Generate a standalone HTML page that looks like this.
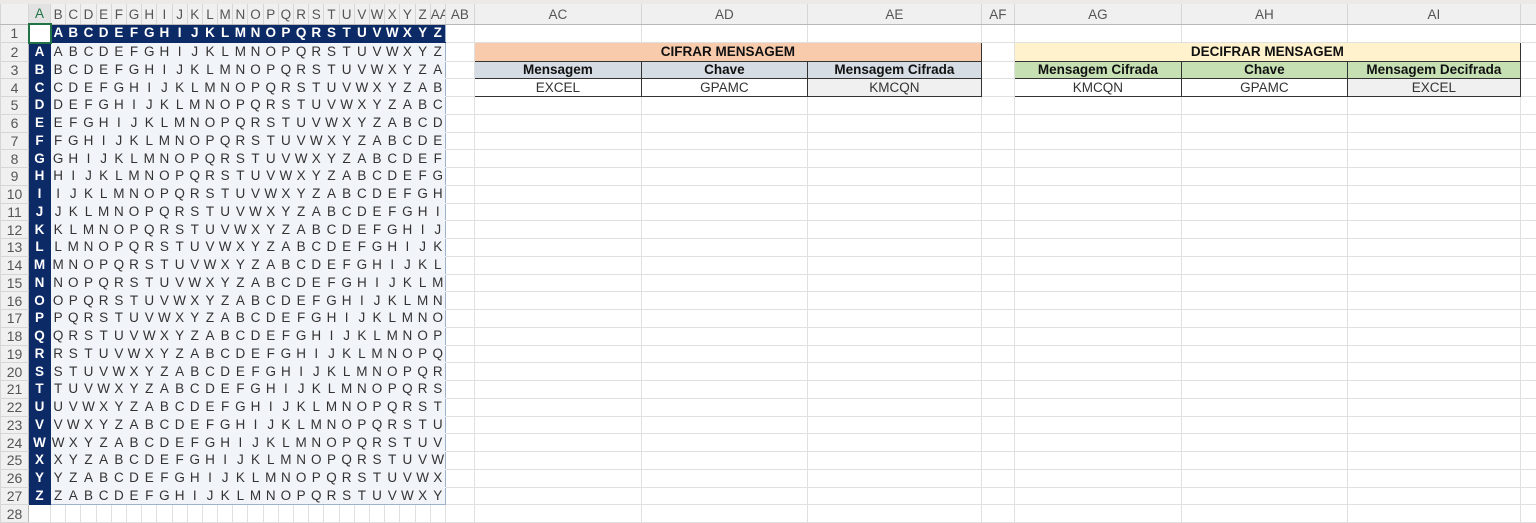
<!DOCTYPE html>
<html><head><meta charset="utf-8"><style>
html,body{margin:0;padding:0;background:#fff;width:1536px;height:512px;overflow:hidden}
body{font-family:"Liberation Sans",sans-serif;font-size:13.5px;color:#333}
table{border-collapse:collapse;table-layout:fixed;position:absolute;left:0;top:0;width:1536px}
td,th{padding:0;text-align:center;border:1px solid #e0e0e0;overflow:hidden;white-space:nowrap;height:16.75px;line-height:16px}
th{font-weight:normal;color:#555;background:#f0f0f0;border-color:#d6d6d6}
thead th{height:19px;vertical-align:bottom;line-height:18px;border-top:4px solid #eceae6;border-bottom:1px solid #b8b8b8;font-size:13.5px}
tbody th{border-right:1px solid #b8b8b8;font-size:14px}
.n{background:#0b2a66;color:#fff;font-weight:bold;border-color:#0b2a66}
.l{background:#f1f4f9;border-color:#f1f4f9}
.r{border-right:1px solid #9fb2cc}
.b td.l{border-bottom:1px solid #9fb2cc}
.o{background:#f8cbad;font-weight:bold;color:#111;border:1px solid #333}
.y{background:#fff2cc;font-weight:bold;color:#111;border:1px solid #333}
.g{background:#d6dce4;font-weight:bold;color:#111;border:1px solid #333}
.gr{background:#c6e0b4;font-weight:bold;color:#111;border:1px solid #333}
.w{border:1px solid #333}
.q{background:#f0f0f0;border:1px solid #333}
.sel{border:2px solid #217346}
</style></head><body>
<table>
<colgroup><col style="width:28px"><col style="width:22px">
<col style="width:15.2px"><col style="width:15.2px"><col style="width:15.2px"><col style="width:15.2px"><col style="width:15.2px"><col style="width:15.2px"><col style="width:15.2px"><col style="width:15.2px"><col style="width:15.2px"><col style="width:15.2px"><col style="width:15.2px"><col style="width:15.2px"><col style="width:15.2px"><col style="width:15.2px"><col style="width:15.2px"><col style="width:15.2px"><col style="width:15.2px"><col style="width:15.2px"><col style="width:15.2px"><col style="width:15.2px"><col style="width:15.2px"><col style="width:15.2px"><col style="width:15.2px"><col style="width:15.2px"><col style="width:15.2px"><col style="width:15.2px">
<col style="width:29px"><col style="width:167px"><col style="width:166px"><col style="width:174px"><col style="width:33px"><col style="width:167px"><col style="width:166px"><col style="width:173px"><col style="width:16px"></colgroup>
<thead><tr><th></th><th style="color:#217346;background:#e2e2e2">A</th><th>B</th><th>C</th><th>D</th><th>E</th><th>F</th><th>G</th><th>H</th><th>I</th><th>J</th><th>K</th><th>L</th><th>M</th><th>N</th><th>O</th><th>P</th><th>Q</th><th>R</th><th>S</th><th>T</th><th>U</th><th>V</th><th>W</th><th>X</th><th>Y</th><th>Z</th><th>AA</th><th>AB</th><th>AC</th><th>AD</th><th>AE</th><th>AF</th><th>AG</th><th>AH</th><th>AI</th><th></th></tr></thead>
<tbody>
<tr><th>1</th><td class="sel"></td><td class="n">A</td><td class="n">B</td><td class="n">C</td><td class="n">D</td><td class="n">E</td><td class="n">F</td><td class="n">G</td><td class="n">H</td><td class="n">I</td><td class="n">J</td><td class="n">K</td><td class="n">L</td><td class="n">M</td><td class="n">N</td><td class="n">O</td><td class="n">P</td><td class="n">Q</td><td class="n">R</td><td class="n">S</td><td class="n">T</td><td class="n">U</td><td class="n">V</td><td class="n">W</td><td class="n">X</td><td class="n">Y</td><td class="n r">Z</td><td></td><td></td><td></td><td></td><td></td><td></td><td></td><td></td><td></td></tr>
<tr><th>2</th><td class="n">A</td><td class="l">A</td><td class="l">B</td><td class="l">C</td><td class="l">D</td><td class="l">E</td><td class="l">F</td><td class="l">G</td><td class="l">H</td><td class="l">I</td><td class="l">J</td><td class="l">K</td><td class="l">L</td><td class="l">M</td><td class="l">N</td><td class="l">O</td><td class="l">P</td><td class="l">Q</td><td class="l">R</td><td class="l">S</td><td class="l">T</td><td class="l">U</td><td class="l">V</td><td class="l">W</td><td class="l">X</td><td class="l">Y</td><td class="l r">Z</td><td></td><td class="o" colspan="3">CIFRAR MENSAGEM</td><td></td><td class="y" colspan="3">DECIFRAR MENSAGEM</td><td></td></tr>
<tr><th>3</th><td class="n">B</td><td class="l">B</td><td class="l">C</td><td class="l">D</td><td class="l">E</td><td class="l">F</td><td class="l">G</td><td class="l">H</td><td class="l">I</td><td class="l">J</td><td class="l">K</td><td class="l">L</td><td class="l">M</td><td class="l">N</td><td class="l">O</td><td class="l">P</td><td class="l">Q</td><td class="l">R</td><td class="l">S</td><td class="l">T</td><td class="l">U</td><td class="l">V</td><td class="l">W</td><td class="l">X</td><td class="l">Y</td><td class="l">Z</td><td class="l r">A</td><td></td><td class="g">Mensagem</td><td class="g">Chave</td><td class="g">Mensagem Cifrada</td><td></td><td class="gr">Mensagem Cifrada</td><td class="gr">Chave</td><td class="gr">Mensagem Decifrada</td><td></td></tr>
<tr><th>4</th><td class="n">C</td><td class="l">C</td><td class="l">D</td><td class="l">E</td><td class="l">F</td><td class="l">G</td><td class="l">H</td><td class="l">I</td><td class="l">J</td><td class="l">K</td><td class="l">L</td><td class="l">M</td><td class="l">N</td><td class="l">O</td><td class="l">P</td><td class="l">Q</td><td class="l">R</td><td class="l">S</td><td class="l">T</td><td class="l">U</td><td class="l">V</td><td class="l">W</td><td class="l">X</td><td class="l">Y</td><td class="l">Z</td><td class="l">A</td><td class="l r">B</td><td></td><td class="w">EXCEL</td><td class="w">GPAMC</td><td class="q">KMCQN</td><td></td><td class="w">KMCQN</td><td class="w">GPAMC</td><td class="q">EXCEL</td><td></td></tr>
<tr><th>5</th><td class="n">D</td><td class="l">D</td><td class="l">E</td><td class="l">F</td><td class="l">G</td><td class="l">H</td><td class="l">I</td><td class="l">J</td><td class="l">K</td><td class="l">L</td><td class="l">M</td><td class="l">N</td><td class="l">O</td><td class="l">P</td><td class="l">Q</td><td class="l">R</td><td class="l">S</td><td class="l">T</td><td class="l">U</td><td class="l">V</td><td class="l">W</td><td class="l">X</td><td class="l">Y</td><td class="l">Z</td><td class="l">A</td><td class="l">B</td><td class="l r">C</td><td></td><td></td><td></td><td></td><td></td><td></td><td></td><td></td><td></td></tr>
<tr><th>6</th><td class="n">E</td><td class="l">E</td><td class="l">F</td><td class="l">G</td><td class="l">H</td><td class="l">I</td><td class="l">J</td><td class="l">K</td><td class="l">L</td><td class="l">M</td><td class="l">N</td><td class="l">O</td><td class="l">P</td><td class="l">Q</td><td class="l">R</td><td class="l">S</td><td class="l">T</td><td class="l">U</td><td class="l">V</td><td class="l">W</td><td class="l">X</td><td class="l">Y</td><td class="l">Z</td><td class="l">A</td><td class="l">B</td><td class="l">C</td><td class="l r">D</td><td></td><td></td><td></td><td></td><td></td><td></td><td></td><td></td><td></td></tr>
<tr><th>7</th><td class="n">F</td><td class="l">F</td><td class="l">G</td><td class="l">H</td><td class="l">I</td><td class="l">J</td><td class="l">K</td><td class="l">L</td><td class="l">M</td><td class="l">N</td><td class="l">O</td><td class="l">P</td><td class="l">Q</td><td class="l">R</td><td class="l">S</td><td class="l">T</td><td class="l">U</td><td class="l">V</td><td class="l">W</td><td class="l">X</td><td class="l">Y</td><td class="l">Z</td><td class="l">A</td><td class="l">B</td><td class="l">C</td><td class="l">D</td><td class="l r">E</td><td></td><td></td><td></td><td></td><td></td><td></td><td></td><td></td><td></td></tr>
<tr><th>8</th><td class="n">G</td><td class="l">G</td><td class="l">H</td><td class="l">I</td><td class="l">J</td><td class="l">K</td><td class="l">L</td><td class="l">M</td><td class="l">N</td><td class="l">O</td><td class="l">P</td><td class="l">Q</td><td class="l">R</td><td class="l">S</td><td class="l">T</td><td class="l">U</td><td class="l">V</td><td class="l">W</td><td class="l">X</td><td class="l">Y</td><td class="l">Z</td><td class="l">A</td><td class="l">B</td><td class="l">C</td><td class="l">D</td><td class="l">E</td><td class="l r">F</td><td></td><td></td><td></td><td></td><td></td><td></td><td></td><td></td><td></td></tr>
<tr><th>9</th><td class="n">H</td><td class="l">H</td><td class="l">I</td><td class="l">J</td><td class="l">K</td><td class="l">L</td><td class="l">M</td><td class="l">N</td><td class="l">O</td><td class="l">P</td><td class="l">Q</td><td class="l">R</td><td class="l">S</td><td class="l">T</td><td class="l">U</td><td class="l">V</td><td class="l">W</td><td class="l">X</td><td class="l">Y</td><td class="l">Z</td><td class="l">A</td><td class="l">B</td><td class="l">C</td><td class="l">D</td><td class="l">E</td><td class="l">F</td><td class="l r">G</td><td></td><td></td><td></td><td></td><td></td><td></td><td></td><td></td><td></td></tr>
<tr><th>10</th><td class="n">I</td><td class="l">I</td><td class="l">J</td><td class="l">K</td><td class="l">L</td><td class="l">M</td><td class="l">N</td><td class="l">O</td><td class="l">P</td><td class="l">Q</td><td class="l">R</td><td class="l">S</td><td class="l">T</td><td class="l">U</td><td class="l">V</td><td class="l">W</td><td class="l">X</td><td class="l">Y</td><td class="l">Z</td><td class="l">A</td><td class="l">B</td><td class="l">C</td><td class="l">D</td><td class="l">E</td><td class="l">F</td><td class="l">G</td><td class="l r">H</td><td></td><td></td><td></td><td></td><td></td><td></td><td></td><td></td><td></td></tr>
<tr><th>11</th><td class="n">J</td><td class="l">J</td><td class="l">K</td><td class="l">L</td><td class="l">M</td><td class="l">N</td><td class="l">O</td><td class="l">P</td><td class="l">Q</td><td class="l">R</td><td class="l">S</td><td class="l">T</td><td class="l">U</td><td class="l">V</td><td class="l">W</td><td class="l">X</td><td class="l">Y</td><td class="l">Z</td><td class="l">A</td><td class="l">B</td><td class="l">C</td><td class="l">D</td><td class="l">E</td><td class="l">F</td><td class="l">G</td><td class="l">H</td><td class="l r">I</td><td></td><td></td><td></td><td></td><td></td><td></td><td></td><td></td><td></td></tr>
<tr><th>12</th><td class="n">K</td><td class="l">K</td><td class="l">L</td><td class="l">M</td><td class="l">N</td><td class="l">O</td><td class="l">P</td><td class="l">Q</td><td class="l">R</td><td class="l">S</td><td class="l">T</td><td class="l">U</td><td class="l">V</td><td class="l">W</td><td class="l">X</td><td class="l">Y</td><td class="l">Z</td><td class="l">A</td><td class="l">B</td><td class="l">C</td><td class="l">D</td><td class="l">E</td><td class="l">F</td><td class="l">G</td><td class="l">H</td><td class="l">I</td><td class="l r">J</td><td></td><td></td><td></td><td></td><td></td><td></td><td></td><td></td><td></td></tr>
<tr><th>13</th><td class="n">L</td><td class="l">L</td><td class="l">M</td><td class="l">N</td><td class="l">O</td><td class="l">P</td><td class="l">Q</td><td class="l">R</td><td class="l">S</td><td class="l">T</td><td class="l">U</td><td class="l">V</td><td class="l">W</td><td class="l">X</td><td class="l">Y</td><td class="l">Z</td><td class="l">A</td><td class="l">B</td><td class="l">C</td><td class="l">D</td><td class="l">E</td><td class="l">F</td><td class="l">G</td><td class="l">H</td><td class="l">I</td><td class="l">J</td><td class="l r">K</td><td></td><td></td><td></td><td></td><td></td><td></td><td></td><td></td><td></td></tr>
<tr><th>14</th><td class="n">M</td><td class="l">M</td><td class="l">N</td><td class="l">O</td><td class="l">P</td><td class="l">Q</td><td class="l">R</td><td class="l">S</td><td class="l">T</td><td class="l">U</td><td class="l">V</td><td class="l">W</td><td class="l">X</td><td class="l">Y</td><td class="l">Z</td><td class="l">A</td><td class="l">B</td><td class="l">C</td><td class="l">D</td><td class="l">E</td><td class="l">F</td><td class="l">G</td><td class="l">H</td><td class="l">I</td><td class="l">J</td><td class="l">K</td><td class="l r">L</td><td></td><td></td><td></td><td></td><td></td><td></td><td></td><td></td><td></td></tr>
<tr><th>15</th><td class="n">N</td><td class="l">N</td><td class="l">O</td><td class="l">P</td><td class="l">Q</td><td class="l">R</td><td class="l">S</td><td class="l">T</td><td class="l">U</td><td class="l">V</td><td class="l">W</td><td class="l">X</td><td class="l">Y</td><td class="l">Z</td><td class="l">A</td><td class="l">B</td><td class="l">C</td><td class="l">D</td><td class="l">E</td><td class="l">F</td><td class="l">G</td><td class="l">H</td><td class="l">I</td><td class="l">J</td><td class="l">K</td><td class="l">L</td><td class="l r">M</td><td></td><td></td><td></td><td></td><td></td><td></td><td></td><td></td><td></td></tr>
<tr><th>16</th><td class="n">O</td><td class="l">O</td><td class="l">P</td><td class="l">Q</td><td class="l">R</td><td class="l">S</td><td class="l">T</td><td class="l">U</td><td class="l">V</td><td class="l">W</td><td class="l">X</td><td class="l">Y</td><td class="l">Z</td><td class="l">A</td><td class="l">B</td><td class="l">C</td><td class="l">D</td><td class="l">E</td><td class="l">F</td><td class="l">G</td><td class="l">H</td><td class="l">I</td><td class="l">J</td><td class="l">K</td><td class="l">L</td><td class="l">M</td><td class="l r">N</td><td></td><td></td><td></td><td></td><td></td><td></td><td></td><td></td><td></td></tr>
<tr><th>17</th><td class="n">P</td><td class="l">P</td><td class="l">Q</td><td class="l">R</td><td class="l">S</td><td class="l">T</td><td class="l">U</td><td class="l">V</td><td class="l">W</td><td class="l">X</td><td class="l">Y</td><td class="l">Z</td><td class="l">A</td><td class="l">B</td><td class="l">C</td><td class="l">D</td><td class="l">E</td><td class="l">F</td><td class="l">G</td><td class="l">H</td><td class="l">I</td><td class="l">J</td><td class="l">K</td><td class="l">L</td><td class="l">M</td><td class="l">N</td><td class="l r">O</td><td></td><td></td><td></td><td></td><td></td><td></td><td></td><td></td><td></td></tr>
<tr><th>18</th><td class="n">Q</td><td class="l">Q</td><td class="l">R</td><td class="l">S</td><td class="l">T</td><td class="l">U</td><td class="l">V</td><td class="l">W</td><td class="l">X</td><td class="l">Y</td><td class="l">Z</td><td class="l">A</td><td class="l">B</td><td class="l">C</td><td class="l">D</td><td class="l">E</td><td class="l">F</td><td class="l">G</td><td class="l">H</td><td class="l">I</td><td class="l">J</td><td class="l">K</td><td class="l">L</td><td class="l">M</td><td class="l">N</td><td class="l">O</td><td class="l r">P</td><td></td><td></td><td></td><td></td><td></td><td></td><td></td><td></td><td></td></tr>
<tr><th>19</th><td class="n">R</td><td class="l">R</td><td class="l">S</td><td class="l">T</td><td class="l">U</td><td class="l">V</td><td class="l">W</td><td class="l">X</td><td class="l">Y</td><td class="l">Z</td><td class="l">A</td><td class="l">B</td><td class="l">C</td><td class="l">D</td><td class="l">E</td><td class="l">F</td><td class="l">G</td><td class="l">H</td><td class="l">I</td><td class="l">J</td><td class="l">K</td><td class="l">L</td><td class="l">M</td><td class="l">N</td><td class="l">O</td><td class="l">P</td><td class="l r">Q</td><td></td><td></td><td></td><td></td><td></td><td></td><td></td><td></td><td></td></tr>
<tr><th>20</th><td class="n">S</td><td class="l">S</td><td class="l">T</td><td class="l">U</td><td class="l">V</td><td class="l">W</td><td class="l">X</td><td class="l">Y</td><td class="l">Z</td><td class="l">A</td><td class="l">B</td><td class="l">C</td><td class="l">D</td><td class="l">E</td><td class="l">F</td><td class="l">G</td><td class="l">H</td><td class="l">I</td><td class="l">J</td><td class="l">K</td><td class="l">L</td><td class="l">M</td><td class="l">N</td><td class="l">O</td><td class="l">P</td><td class="l">Q</td><td class="l r">R</td><td></td><td></td><td></td><td></td><td></td><td></td><td></td><td></td><td></td></tr>
<tr><th>21</th><td class="n">T</td><td class="l">T</td><td class="l">U</td><td class="l">V</td><td class="l">W</td><td class="l">X</td><td class="l">Y</td><td class="l">Z</td><td class="l">A</td><td class="l">B</td><td class="l">C</td><td class="l">D</td><td class="l">E</td><td class="l">F</td><td class="l">G</td><td class="l">H</td><td class="l">I</td><td class="l">J</td><td class="l">K</td><td class="l">L</td><td class="l">M</td><td class="l">N</td><td class="l">O</td><td class="l">P</td><td class="l">Q</td><td class="l">R</td><td class="l r">S</td><td></td><td></td><td></td><td></td><td></td><td></td><td></td><td></td><td></td></tr>
<tr><th>22</th><td class="n">U</td><td class="l">U</td><td class="l">V</td><td class="l">W</td><td class="l">X</td><td class="l">Y</td><td class="l">Z</td><td class="l">A</td><td class="l">B</td><td class="l">C</td><td class="l">D</td><td class="l">E</td><td class="l">F</td><td class="l">G</td><td class="l">H</td><td class="l">I</td><td class="l">J</td><td class="l">K</td><td class="l">L</td><td class="l">M</td><td class="l">N</td><td class="l">O</td><td class="l">P</td><td class="l">Q</td><td class="l">R</td><td class="l">S</td><td class="l r">T</td><td></td><td></td><td></td><td></td><td></td><td></td><td></td><td></td><td></td></tr>
<tr><th>23</th><td class="n">V</td><td class="l">V</td><td class="l">W</td><td class="l">X</td><td class="l">Y</td><td class="l">Z</td><td class="l">A</td><td class="l">B</td><td class="l">C</td><td class="l">D</td><td class="l">E</td><td class="l">F</td><td class="l">G</td><td class="l">H</td><td class="l">I</td><td class="l">J</td><td class="l">K</td><td class="l">L</td><td class="l">M</td><td class="l">N</td><td class="l">O</td><td class="l">P</td><td class="l">Q</td><td class="l">R</td><td class="l">S</td><td class="l">T</td><td class="l r">U</td><td></td><td></td><td></td><td></td><td></td><td></td><td></td><td></td><td></td></tr>
<tr><th>24</th><td class="n">W</td><td class="l">W</td><td class="l">X</td><td class="l">Y</td><td class="l">Z</td><td class="l">A</td><td class="l">B</td><td class="l">C</td><td class="l">D</td><td class="l">E</td><td class="l">F</td><td class="l">G</td><td class="l">H</td><td class="l">I</td><td class="l">J</td><td class="l">K</td><td class="l">L</td><td class="l">M</td><td class="l">N</td><td class="l">O</td><td class="l">P</td><td class="l">Q</td><td class="l">R</td><td class="l">S</td><td class="l">T</td><td class="l">U</td><td class="l r">V</td><td></td><td></td><td></td><td></td><td></td><td></td><td></td><td></td><td></td></tr>
<tr><th>25</th><td class="n">X</td><td class="l">X</td><td class="l">Y</td><td class="l">Z</td><td class="l">A</td><td class="l">B</td><td class="l">C</td><td class="l">D</td><td class="l">E</td><td class="l">F</td><td class="l">G</td><td class="l">H</td><td class="l">I</td><td class="l">J</td><td class="l">K</td><td class="l">L</td><td class="l">M</td><td class="l">N</td><td class="l">O</td><td class="l">P</td><td class="l">Q</td><td class="l">R</td><td class="l">S</td><td class="l">T</td><td class="l">U</td><td class="l">V</td><td class="l r">W</td><td></td><td></td><td></td><td></td><td></td><td></td><td></td><td></td><td></td></tr>
<tr><th>26</th><td class="n">Y</td><td class="l">Y</td><td class="l">Z</td><td class="l">A</td><td class="l">B</td><td class="l">C</td><td class="l">D</td><td class="l">E</td><td class="l">F</td><td class="l">G</td><td class="l">H</td><td class="l">I</td><td class="l">J</td><td class="l">K</td><td class="l">L</td><td class="l">M</td><td class="l">N</td><td class="l">O</td><td class="l">P</td><td class="l">Q</td><td class="l">R</td><td class="l">S</td><td class="l">T</td><td class="l">U</td><td class="l">V</td><td class="l">W</td><td class="l r">X</td><td></td><td></td><td></td><td></td><td></td><td></td><td></td><td></td><td></td></tr>
<tr class="b"><th>27</th><td class="n">Z</td><td class="l">Z</td><td class="l">A</td><td class="l">B</td><td class="l">C</td><td class="l">D</td><td class="l">E</td><td class="l">F</td><td class="l">G</td><td class="l">H</td><td class="l">I</td><td class="l">J</td><td class="l">K</td><td class="l">L</td><td class="l">M</td><td class="l">N</td><td class="l">O</td><td class="l">P</td><td class="l">Q</td><td class="l">R</td><td class="l">S</td><td class="l">T</td><td class="l">U</td><td class="l">V</td><td class="l">W</td><td class="l">X</td><td class="l r">Y</td><td></td><td></td><td></td><td></td><td></td><td></td><td></td><td></td><td></td></tr>
<tr><th>28</th><td></td><td></td><td></td><td></td><td></td><td></td><td></td><td></td><td></td><td></td><td></td><td></td><td></td><td></td><td></td><td></td><td></td><td></td><td></td><td></td><td></td><td></td><td></td><td></td><td></td><td></td><td></td><td></td><td></td><td></td><td></td><td></td><td></td><td></td><td></td><td></td></tr>
</tbody></table>
</body></html>
